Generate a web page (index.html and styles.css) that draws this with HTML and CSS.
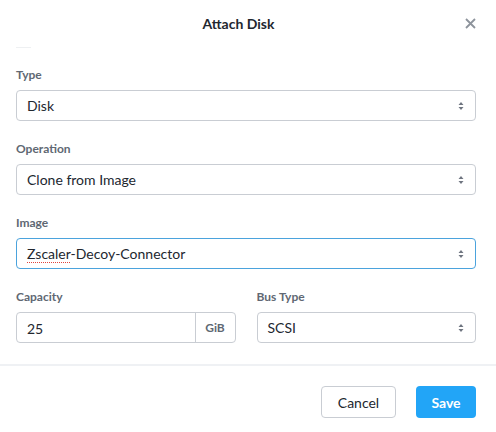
FILE: index.html
```html
<!DOCTYPE html>
<html>
<head>
<meta charset="utf-8">
<link rel="stylesheet" href="styles.css">
</head>
<body>
<div class="modal">
  <div class="header">
    <div class="title">Attach Disk</div>
    <button class="close" aria-label="Close">
      <svg width="11" height="11" viewBox="0 0 11 11"><path d="M1 1L10 10M10 1L1 10" stroke="#8d939c" stroke-width="1.8" fill="none"/></svg>
    </button>
  </div>
  <div class="body">
    <div class="faint"></div>
    <div class="field">
      <div class="label">Type</div>
      <div class="select"><span class="value">Disk</span><svg class="arrows" width="6" height="8" viewBox="0 0 6 8"><path d="M3 0L5.5 3H0.5Z M3 8L5.5 5H0.5Z" fill="#6f7580"/></svg></div>
    </div>
    <div class="field">
      <div class="label">Operation</div>
      <div class="select"><span class="value">Clone from Image</span><svg class="arrows" width="6" height="8" viewBox="0 0 6 8"><path d="M3 0L5.5 3H0.5Z M3 8L5.5 5H0.5Z" fill="#6f7580"/></svg></div>
    </div>
    <div class="field">
      <div class="label">Image</div>
      <div class="select focused"><span class="value"><span class="misspelled">Zscaler</span>-Decoy-Connector</span><svg class="arrows" width="6" height="8" viewBox="0 0 6 8"><path d="M3 0L5.5 3H0.5Z M3 8L5.5 5H0.5Z" fill="#6f7580"/></svg></div>
    </div>
    <div class="row">
      <div class="field">
        <div class="label">Capacity</div>
        <div class="input-group">
          <span class="input-value">25</span>
          <span class="addon">GiB</span>
        </div>
      </div>
      <div class="field">
        <div class="label">Bus Type</div>
        <div class="select"><span class="value">SCSI</span><svg class="arrows" width="6" height="8" viewBox="0 0 6 8"><path d="M3 0L5.5 3H0.5Z M3 8L5.5 5H0.5Z" fill="#6f7580"/></svg></div>
      </div>
    </div>
  </div>
  <div class="footer">
    <button class="btn btn-cancel">Cancel</button>
    <button class="btn btn-save">Save</button>
  </div>
</div>
</body>
</html>
```

FILE: styles.css
```css
* { box-sizing: border-box; }
html, body {
  margin: 0;
  padding: 0;
  background: #ffffff;
}
body {
  font-family: Lato, "Liberation Sans", sans-serif;
  color: #22272f;
  width: 496px;
  height: 432px;
  overflow: hidden;
}
.modal {
  width: 496px;
}
.header {
  display: flex;
  align-items: center;
  height: 46px;
  padding: 0 16px 0 17px;
}
.title {
  flex: 1;
  text-align: center;
  font-size: 14px;
  font-weight: 700;
  color: #22272f;
}
.close {
  width: 20px;
  height: 20px;
  padding: 0;
  border: 0;
  background: none;
  display: flex;
  align-items: center;
  justify-content: center;
  margin-top: 1px;
}
.body {
  padding: 0 20px 21px 16px;
}
.faint {
  width: 15px;
  height: 1px;
  background: #eef0f2;
  margin-top: 1px;
  margin-bottom: 19px;
}
.field {
  margin-bottom: 20px;
}
.row .field,
.field:last-child {
  margin-bottom: 0;
}
.label {
  font-size: 12px;
  line-height: 16px;
  font-weight: 700;
  color: #606873;
  margin-bottom: 7px;
}
.select {
  height: 31px;
  border: 1px solid #c9cdd3;
  border-radius: 4px;
  display: flex;
  align-items: center;
  justify-content: space-between;
  padding: 0 11px 0 10px;
  font-size: 14px;
  color: #22272f;
}
.select.focused {
  border-color: #4ba3dd;
}
.value {
  line-height: 16px;
  padding-top: 1px;
}
.misspelled {
  text-decoration-line: underline;
  text-decoration-style: dotted;
  text-decoration-color: #e0453d;
  text-decoration-thickness: 1px;
  text-underline-offset: 3px;
}
.arrows {
  display: block;
}
.row {
  display: grid;
  grid-template-columns: 1fr 1fr;
  column-gap: 21px;
}
.input-group {
  display: flex;
  height: 31px;
  border: 1px solid #c9cdd3;
  border-radius: 4px;
  font-size: 14px;
}
.input-value {
  flex: 1;
  display: flex;
  align-items: center;
  padding: 1px 10px 0 10px;
}
.addon {
  width: 40px;
  border-left: 1px solid #c9cdd3;
  display: flex;
  align-items: center;
  justify-content: center;
  font-size: 12px;
  font-weight: 700;
  color: #606873;
}
.footer {
  border-top: 2px solid #eff1f4;
  display: flex;
  justify-content: flex-end;
  gap: 20px;
  padding: 20px 20px 0 0;
}
.btn {
  height: 32px;
  border-radius: 4px;
  font-family: Lato, "Liberation Sans", sans-serif;
  font-size: 14px;
  padding: 0;
}
.btn-cancel {
  width: 75px;
  background: #ffffff;
  border: 1px solid #c9cdd3;
  color: #22272f;
}
.btn-save {
  width: 60px;
  background: #22a5f7;
  border: 0;
  color: #ffffff;
  font-weight: 700;
}
```
